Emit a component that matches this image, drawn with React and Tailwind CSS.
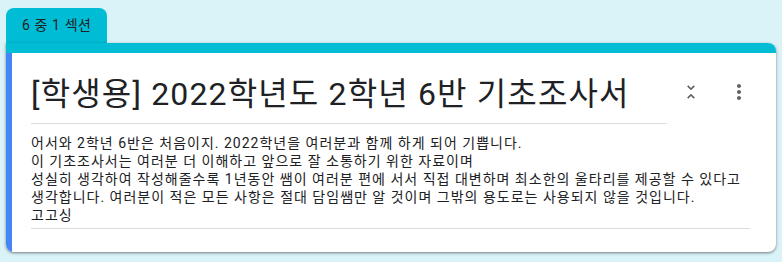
const font = { fontFamily: 'Roboto, "Noto Sans CJK KR", sans-serif' };

const UnfoldLess = () => (
  <svg width="24" height="24" viewBox="0 0 24 24" fill="#5f6368">
    <path d="M7.41 18.59L8.83 20 12 16.83 15.17 20l1.41-1.41L12 14l-4.59 4.59zm9.18-13.18L15.17 4 12 7.17 8.83 4 7.41 5.41 12 10l4.59-4.59z" />
  </svg>
);

const MoreVert = () => (
  <svg width="24" height="24" viewBox="0 0 24 24" fill="#5f6368">
    <path d="M12 8c1.1 0 2-.9 2-2s-.9-2-2-2-2 .9-2 2 .9 2 2 2zm0 2c-1.1 0-2 .9-2 2s.9 2 2 2 2-.9 2-2-.9-2-2-2zm0 6c-1.1 0-2 .9-2 2s.9 2 2 2 2-.9 2-2-.9-2-2-2z" />
  </svg>
);

export default function App() {
  return (
    <div className="w-[782px] h-[262px] bg-[#d9f3f8] pt-2 pl-[6px] pr-[6px]" style={font}>
      {/* TAB */}
      <div className="w-[101px] h-[35px] bg-[#00bcd4] rounded-t-lg flex items-center pl-4 text-[14px] tracking-[0.6px] text-[#202124]">
        6 중 1 섹션
      </div>

      {/* CARD */}
      <div className="bg-white rounded-b-lg rounded-tr-lg shadow-[0_1px_2px_rgba(0,0,0,0.3),0_1px_3px_1px_rgba(0,0,0,0.15)] overflow-hidden">
        <div className="h-[10px] bg-[#00bcd4]"></div>
        <div className="flex border-l-[6px] border-[#4285f4] h-[199px]">
          <div className="flex-1 pl-[19px] pr-6 pt-[18px]">
            <div className="flex items-start">
              <div className="w-[636px] border-b border-[#dadce0] pb-[6px]">
                <div className="text-[32px] leading-[46px] tracking-[1.15px] text-[#202124] whitespace-nowrap">[학생용] 2022학년도 2학년 6반 기초조사서</div>
              </div>
              <div className="flex items-center gap-6 ml-3 mt-[9px]">
                <div className="w-6 h-6 flex items-center justify-center scale-[0.85]"><UnfoldLess /></div>
                <div className="w-6 h-6 flex items-center justify-center"><MoreVert /></div>
              </div>
            </div>
            <div className="mt-[10px] w-[719px] border-b border-[#dadce0] pb-[4px] text-[14px] leading-[18px] tracking-[1px] text-[#202124] whitespace-nowrap">
              <div>어서와 2학년 6반은 처음이지. 2022학년을 여러분과 함께 하게 되어 기쁩니다.</div>
              <div>이 기초조사서는 여러분 더 이해하고 앞으로 잘 소통하기 위한 자료이며</div>
              <div>성실히 생각하여 작성해줄수록 1년동안 쌤이 여러분 편에 서서 직접 대변하며 최소한의 울타리를 제공할 수 있다고</div>
              <div>생각합니다. 여러분이 적은 모든 사항은 절대 담임쌤만 알 것이며 그밖의 용도로는 사용되지 않을 것입니다.</div>
              <div>고고싱</div>
            </div>
          </div>
        </div>
      </div>
    </div>
  );
}
